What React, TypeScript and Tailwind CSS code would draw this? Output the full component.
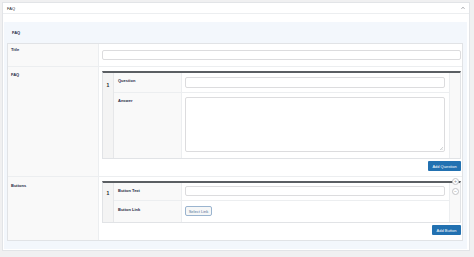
import React from "react";

const lbl = "block text-[4px] leading-[5px] font-bold text-[#1e2b45]";

function Input({ h = 10 }: { h?: number }) {
  return (
    <div
      className="w-full bg-white border border-[#dcdcde] rounded-[2px]"
      style={{ height: h }}
    />
  );
}

function Circle({ sign, top }: { sign: string; top: number }) {
  return (
    <div
      className="absolute left-[2px] w-[7px] h-[7px] rounded-full bg-white border border-[#c3c4c7] flex items-center justify-center text-[5px] leading-[5px] text-[#8c8f94]"
      style={{ top }}
    >
      {sign}
    </div>
  );
}

export default function App() {
  return (
    <div className="w-[474px] h-[257px] bg-[#f0f0f1] pt-[2px] pl-[2px] overflow-hidden text-[4px] leading-[5px] font-['Liberation_Sans',Arial,sans-serif]">
      <div className="w-[468px] bg-white border border-[#e2e4e7]">
        {/* header */}
        <div className="h-[11px] flex items-center justify-between pl-[4px] pr-[4px] border-b border-[#eceef0]">
          <span className="block text-[4px] leading-[5px] text-[#1d2327]">FAQ</span>
          <svg width="4" height="4" viewBox="0 0 4 4">
            <path d="M0.5 2.8 L2 1.2 L3.5 2.8" fill="none" stroke="#8c8f94" strokeWidth="0.8" />
          </svg>
        </div>
        <div className="pt-[8px] pl-[1px] pr-[2px] pb-[1px]">
          <div className="bg-[#f3f7fc] pl-[3px] pr-[4px] pb-[8px]">
            <div className="h-[21px] flex items-center pl-[5px]">
              <span className={lbl}>FAQ</span>
            </div>
            {/* fields table */}
            <div className="bg-white border border-[#e1e3e6]">
              {/* Title row */}
              <div className="flex h-[22px]">
                <div className="w-[91px] shrink-0 bg-[#f9f9f9] border-r border-[#eceef0] pl-[3px] pt-[3px]">
                  <span className={lbl}>Title</span>
                </div>
                <div className="flex-1 pl-[3px] pr-[1px] pt-[6px]">
                  <Input />
                </div>
              </div>
              {/* FAQ row */}
              <div className="flex border-t border-[#eceef0]">
                <div className="w-[91px] shrink-0 bg-[#f9f9f9] border-r border-[#eceef0] pl-[3px] pt-[5px]">
                  <span className={lbl}>FAQ</span>
                </div>
                <div className="flex-1 pl-[3px] pr-[1px] pt-[4px] pb-[5px]">
                  <div className="border-t-2 border-[#5b5f63] border-x border-b border-x-[#e1e3e6] border-b-[#e1e3e6] flex">
                    <div className="w-[11px] shrink-0 bg-[#f4f4f4] border-r border-[#e6e7e9] flex justify-center pt-[10px]">
                      <span className="block text-[5px] leading-[5px] font-bold text-[#1d2327]">1</span>
                    </div>
                    <div className="flex-1 flex flex-col">
                      <div className="flex h-[20px] border-b border-[#eceef0]">
                        <div className="w-[68px] shrink-0 bg-[#f9f9f9] border-r border-[#eceef0] pl-[4px] pt-[5px]">
                          <span className={lbl}>Question</span>
                        </div>
                        <div className="flex-1 pl-[3px] pr-[4px] pt-[4px]">
                          <Input h={11} />
                        </div>
                      </div>
                      <div className="flex h-[65px]">
                        <div className="w-[68px] shrink-0 bg-[#f9f9f9] border-r border-[#eceef0] pl-[4px] pt-[5px]">
                          <span className={lbl}>Answer</span>
                        </div>
                        <div className="flex-1 pl-[3px] pr-[4px] pt-[4px]">
                          <div className="relative w-full h-[55px] bg-white border border-[#dcdcde] rounded-[2px]">
                            <svg className="absolute right-[1px] bottom-[1px]" width="3" height="3" viewBox="0 0 3 3">
                              <path d="M0 3 L3 0 M1.5 3 L3 1.5" stroke="#a7aaad" strokeWidth="0.5" />
                            </svg>
                          </div>
                        </div>
                      </div>
                    </div>
                    <div className="w-[11px] shrink-0 bg-[#f9f9f9] border-l border-[#eceef0]" />
                  </div>
                  <div className="flex justify-end mt-[2px]">
                    <div className="h-[10px] w-[33px] bg-[#2271b1] rounded-[1px] flex items-center justify-center text-[4px] leading-[5px] text-white">
                      Add Question
                    </div>
                  </div>
                </div>
              </div>
              {/* Buttons row */}
              <div className="flex border-t border-[#eceef0]">
                <div className="w-[91px] shrink-0 bg-[#f9f9f9] border-r border-[#eceef0] pl-[3px] pt-[6px]">
                  <span className={lbl}>Buttons</span>
                </div>
                <div className="flex-1 pl-[3px] pr-[1px] pt-[4px] pb-[5px]">
                  <div className="border-t-2 border-[#5b5f63] border-x border-b border-x-[#e1e3e6] border-b-[#e1e3e6] flex">
                    <div className="w-[11px] shrink-0 bg-[#f4f4f4] border-r border-[#e6e7e9] flex justify-center pt-[8px]">
                      <span className="block text-[5px] leading-[5px] font-bold text-[#1d2327]">1</span>
                    </div>
                    <div className="flex-1 flex flex-col">
                      <div className="flex h-[18px] border-b border-[#eceef0]">
                        <div className="w-[68px] shrink-0 bg-[#f9f9f9] border-r border-[#eceef0] pl-[4px] pt-[5px]">
                          <span className={lbl}>Button Text</span>
                        </div>
                        <div className="flex-1 pl-[3px] pr-[4px] pt-[3px]">
                          <Input />
                        </div>
                      </div>
                      <div className="flex h-[21px]">
                        <div className="w-[68px] shrink-0 bg-[#f9f9f9] border-r border-[#eceef0] pl-[4px] pt-[6px]">
                          <span className={lbl}>Button Link</span>
                        </div>
                        <div className="flex-1 pl-[3px] pr-[4px] pt-[5px]">
                          <div className="h-[10px] w-[27px] bg-[#f6f7f7] border border-[#9ab4cf] rounded-[2px] flex items-center justify-center text-[4px] leading-[5px] text-[#50739a]">
                            Select Link
                          </div>
                        </div>
                      </div>
                    </div>
                    <div className="relative w-[11px] shrink-0 bg-[#f9f9f9] border-l border-[#eceef0]">
                      <Circle sign="+" top={-5} />
                      <Circle sign="−" top={5} />
                    </div>
                  </div>
                  <div className="flex justify-end mt-[2px]">
                    <div className="h-[10px] w-[29px] bg-[#2271b1] rounded-[1px] flex items-center justify-center text-[4px] leading-[5px] text-white">
                      Add Button
                    </div>
                  </div>
                </div>
              </div>
            </div>
          </div>
        </div>
      </div>
    </div>
  );
}
